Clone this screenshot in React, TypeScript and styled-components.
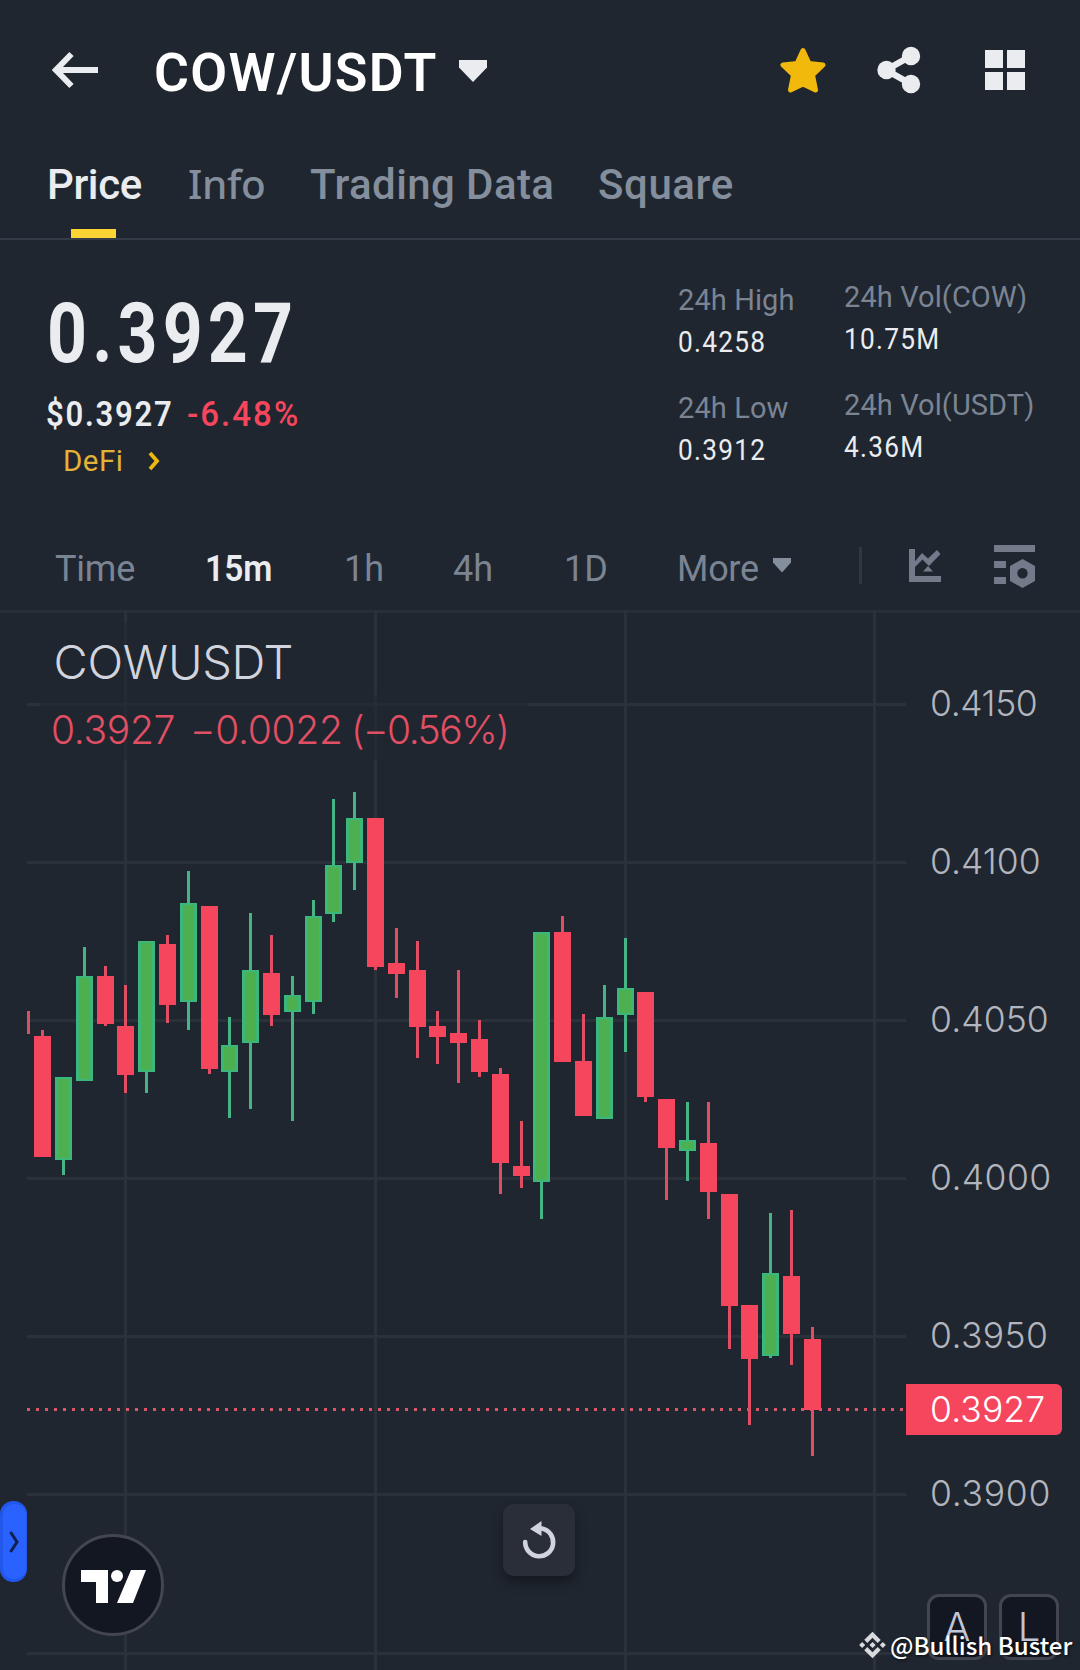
import React from "react";
import styled, { createGlobalStyle, css } from "styled-components";

const color = {
  bg: "#1f262f",
  line: "#333b47",
  grid: "#2b313b",
  text: "#eaecef",
  muted: "#848e9c",
  red: "#f6465d",
  yellow: "#f0b90b",
};

const Global = createGlobalStyle`
  * { box-sizing: border-box; }
  body { margin: 0; background: ${color.bg}; }
`;

const Screen = styled.div`
  width: 1080px;
  height: 1670px;
  overflow: hidden;
  display: flex;
  flex-direction: column;
  background: ${color.bg};
  color: ${color.text};
  font-family: Roboto, "Liberation Sans", sans-serif;
`;

type TextProps = {
  $size: number;
  $weight?: number;
  $color?: string;
  $track?: number;
  $narrow?: number;
  $line?: number;
};

const Text = styled.span<TextProps>`
  display: block;
  white-space: pre;
  font-size: ${(p) => p.$size}px;
  font-weight: ${(p) => p.$weight ?? 400};
  color: ${(p) => p.$color ?? color.text};
  letter-spacing: ${(p) => p.$track ?? 0}px;
  line-height: ${(p) => (p.$line ? `${p.$line}px` : 1.2)};
  ${(p) =>
    p.$narrow &&
    css`
      transform: scaleX(${p.$narrow});
      transform-origin: 0 50%;
    `}
`;

const ChartText = styled(Text)`
  font-family: Inter, "Liberation Sans", sans-serif;
`;

const SerifIText = styled(Text)`
  font-family: "Noto Sans", Roboto, sans-serif;
`;

const Header = styled.header`
  height: 140px;
  padding: 0 55px 0 52px;
  display: flex;
  align-items: center;
  svg { flex: none; display: block; }
`;

const PairTitle = styled.div`
  flex: 1;
  display: flex;
  align-items: center;
  padding: 7px 0 0 55px;
  svg { margin-top: -5px; }
`;

const TitleBox = styled.div`
  width: 305px;
`;

const HeaderActions = styled.div`
  display: grid;
  grid-template-columns: 97px 108px 40px;
  align-items: center;
  svg:first-child { margin-top: 2px; }
`;

const Tabs = styled.nav`
  height: 100px;
  padding: 20px 0 0 47px;
  display: flex;
  border-bottom: 2px solid ${color.line};
`;

const Tab = styled.div<{ $width: number; $active?: boolean }>`
  width: ${(p) => p.$width}px;
  height: 78px;
  display: flex;
  flex-direction: column;
  justify-content: space-between;
  ${(p) =>
    p.$active &&
    css`
      &::after {
        content: "";
        width: 45px;
        height: 9px;
        margin-left: 24px;
        background: #fcd535;
      }
    `}
`;

const Summary = styled.section`
  height: 270px;
  display: flex;
`;

const PriceBlock = styled.div`
  width: 678px;
  padding: 42px 0 0 47px;
`;

const PriceRow = styled.div`
  display: grid;
  grid-template-columns: 141px auto;
  margin-left: -1px;
`;

const Category = styled.div`
  display: flex;
  align-items: center;
  padding-left: 16px;
  margin-top: -1px;
  svg { margin-left: 25px; }
`;

const StatColumn = styled.div<{ $width: number; $top: number }>`
  width: ${(p) => p.$width}px;
  padding-top: ${(p) => p.$top}px;
  display: flex;
  flex-direction: column;
  gap: 24px;
`;

const IntervalBar = styled.nav`
  height: 100px;
  padding: 20px 0 0 55px;
  display: flex;
  svg { display: block; flex: none; }
`;

const Interval = styled.div<{ $width: number }>`
  width: ${(p) => p.$width}px;
  display: flex;
  > svg { margin-top: 28px; margin-left: 14px; }
`;

const Divider = styled.i`
  width: 3px;
  height: 37px;
  margin: 17px 47px 0 0;
  background: #303742;
`;

const ToolIcon = styled.div<{ $gap: number; $top: number }>`
  margin: ${(p) => p.$top}px ${(p) => p.$gap}px 0 0;
`;

const ChartArea = styled.section`
  position: relative;
  height: 1060px;
  display: flex;
`;

const Plot = styled.svg`
  display: block;
  flex: none;
  width: 906px;
  height: 1060px;
`;

const TopRule = styled.i`
  position: absolute;
  left: 906px;
  right: 0;
  top: 0;
  height: 3px;
  background: ${color.grid};
  opacity: 0.8;
`;

const Axis = styled.div`
  padding: 15.2px 0 0 24px;
`;

const AxisRow = styled.div`
  height: 158px;
  display: flex;
  align-items: center;
`;

const Legend = styled.div`
  position: absolute;
  left: 40px;
  top: 12px;
  display: flex;
  flex-direction: column;
  align-items: flex-start;
`;

const LegendRow = styled.div<{ $height: number; $pad: number; $width: number }>`
  height: ${(p) => p.$height}px;
  width: ${(p) => p.$width}px;
  padding-left: ${(p) => p.$pad}px;
  display: grid;
  grid-template-columns: 139px 161px auto;
  background: rgba(31, 38, 47, 0.55);
`;

const LastPrice = styled.div`
  position: absolute;
  left: 906px;
  top: 774px;
  width: 156px;
  height: 51px;
  padding-left: 24px;
  border-radius: 0 6px 6px 0;
  background: ${color.red};
`;

const DrawerHandle = styled.div`
  position: absolute;
  left: 0;
  top: 891px;
  width: 27px;
  height: 81px;
  border-radius: 13px;
  border: 3px solid #2157ea;
  border-right-width: 1px;
  background: #2962ff;
  display: flex;
  align-items: center;
  padding-left: 6px;
`;

const Badge = styled.div`
  position: absolute;
  left: 61.5px;
  top: 923.5px;
  width: 102px;
  height: 102px;
  border: 3px solid #434651;
  border-radius: 50%;
  background: #131722;
  svg { display: block; margin: 33px 0 0 16px; }
`;

const ResetButton = styled.div`
  position: absolute;
  left: 503px;
  top: 894px;
  width: 72px;
  height: 72px;
  border-radius: 11px;
  background: #2a2e39;
  box-shadow: 0 6px 12px rgba(0, 0, 0, 0.35);
  svg { display: block; margin: 13px 0 0 16px; }
`;

const ScaleKeys = styled.div`
  position: absolute;
  left: 927px;
  top: 984px;
  display: flex;
  gap: 12px;
`;

const ScaleKey = styled.div`
  width: 60px;
  height: 66px;
  border: 3px solid #434651;
  border-radius: 12px;
  background: #131722;
  display: flex;
  justify-content: center;
  padding-top: 5px;
`;

const Watermark = styled.div`
  position: absolute;
  left: 859px;
  top: 1017px;
  display: flex;
  align-items: center;
  height: 36px;
  gap: 4px;
  font-family: "Noto Sans CJK SC", "Noto Sans", sans-serif;
  font-size: 24.1px;
  font-weight: 500;
  line-height: 36px;
  color: #fff;
  white-space: pre;
  text-shadow: 1px 1px 3px rgba(0, 0, 0, 0.7);
`;

// [left, rising, high, bodyTop, bodyBottom, low] in screen pixels
type Candle = [number, 0 | 1, number, number, number, number];
const candles: Candle[] = [
  [34, 0, 1030, 1036, 1157, 1157],
  [55, 1, 1077, 1077, 1160, 1175],
  [76, 1, 947, 976, 1081, 1081],
  [97, 0, 966, 976, 1024, 1026],
  [117, 0, 985, 1026, 1075, 1093],
  [138, 1, 941, 941, 1072, 1093],
  [159, 0, 935, 944, 1005, 1023],
  [180, 1, 871, 903, 1002, 1030],
  [201, 0, 906, 906, 1069, 1074],
  [221, 1, 1017, 1045, 1072, 1118],
  [242, 1, 913, 970, 1043, 1109],
  [263, 0, 935, 973, 1015, 1026],
  [284, 1, 976, 995, 1012, 1121],
  [305, 1, 900, 916, 1002, 1014],
  [325, 1, 799, 865, 914, 922],
  [346, 1, 792, 818, 863, 890],
  [367, 0, 818, 818, 967, 970],
  [388, 0, 928, 963, 974, 998],
  [409, 0, 941, 970, 1027, 1058],
  [429, 0, 1011, 1026, 1037, 1064],
  [450, 0, 970, 1033, 1043, 1083],
  [471, 0, 1020, 1039, 1072, 1077],
  [492, 0, 1068, 1074, 1163, 1194],
  [513, 0, 1121, 1166, 1176, 1188],
  [533, 1, 932, 932, 1182, 1219],
  [554, 0, 916, 932, 1062, 1062],
  [575, 0, 1014, 1061, 1116, 1116],
  [596, 1, 985, 1017, 1119, 1119],
  [617, 1, 938, 988, 1015, 1052],
  [637, 0, 992, 992, 1097, 1102],
  [658, 0, 1099, 1099, 1148, 1200],
  [679, 1, 1102, 1140, 1151, 1181],
  [700, 0, 1102, 1143, 1192, 1219],
  [721, 0, 1194, 1194, 1306, 1349],
  [741, 0, 1305, 1305, 1359, 1425],
  [762, 1, 1213, 1273, 1356, 1358],
  [783, 0, 1210, 1276, 1334, 1365],
  [804, 0, 1327, 1339, 1410, 1456],
];

const gridX = [124, 374, 624, 873];
const gridY = [703, 861, 1019, 1177, 1335, 1493, 1652];
const prices: [string, number][] = [
  ["0.4150", -0.4],
  ["0.4100", 0],
  ["0.4050", 0.1],
  ["0.4000", 0.4],
  ["0.3950", 0.4],
  ["0.3900", 0.7],
];

function CandleChart() {
  return (
    <Plot viewBox="0 610 906 1060">
      <rect x="0" y="610" width="906" height="3" fill={color.grid} opacity="0.8" />
      {gridX.map((x) => (
        <rect key={x} x={x} y="610" width="3" height="1060" fill={color.grid} />
      ))}
      {gridY.map((y) => (
        <rect key={y} x="27" y={y} width="879" height="3" fill={color.grid} />
      ))}
      <line x1="27" x2="906" y1="1409.5" y2="1409.5" stroke="#d9566b" strokeWidth="3" strokeDasharray="3 6" />
      <rect x="27" y="1011" width="3" height="23" fill="#d94f63" />
      {candles.map(([x, up, high, top, bottom, low]) => (
        <g key={x}>
          <rect x={x + 7} y={high} width="3" height={low - high} fill={up ? "#45b585" : "#e14d62"} />
          <rect x={x} y={top} width="17" height={bottom - top} fill={up ? "#3cb77c" : color.red} />
          {up === 1 && <rect x={x + 3} y={top + 2} width="11" height={bottom - top - 4} fill="#4caf50" />}
        </g>
      ))}
    </Plot>
  );
}

function Stat({ label, value }: { label: string; value: string }) {
  return (
    <div>
      <Text $size={29} $line={40} $track={0.1} $color="#7b8493">{label}</Text>
      <Text $size={29.5} $line={44} $track={1.4} $narrow={0.89} $weight={450}>{value}</Text>
    </div>
  );
}

export default function App() {
  return (
    <Screen>
      <Global />
      <Header>
        <svg width="47" height="40" viewBox="0 0 47 40">
          <path d="M5 20H46M19.5 4L4 20L19.5 36" fill="none" stroke={color.text} strokeWidth="6" />
        </svg>
        <PairTitle>
          <TitleBox>
            <Text $size={53.5} $weight={600} $track={1.3} $color="#fff">COW/USDT</Text>
          </TitleBox>
          <svg width="28" height="23" viewBox="0 0 28 23"><path d="M0 0H28V7.5L14 22L0 7.5Z" fill={color.text} /></svg>
        </PairTitle>
        <HeaderActions>
          <svg width="46" height="48" viewBox="0 0 46 48">
            <path d="M23 3.5L29 16.5L43 18L32.5 28L35.5 43L23 37L10.5 43L13.5 28L3 18L17 16.5Z" fill={color.yellow} stroke={color.yellow} strokeWidth="5" strokeLinejoin="round" />
          </svg>
          <svg width="44" height="48" viewBox="0 0 44 48">
            <path d="M34 10L9 24L34 38" fill="none" stroke={color.text} strokeWidth="6.5" />
            <circle cx="34" cy="10" r="9.2" fill={color.text} />
            <circle cx="9.5" cy="24" r="9.2" fill={color.text} />
            <circle cx="34" cy="38" r="9.2" fill={color.text} />
          </svg>
          <svg width="40" height="40" viewBox="0 0 40 40">
            <path d="M0 0H18V18H0ZM22 0H40V18H22ZM0 22H18V40H0ZM22 22H40V40H22Z" fill={color.text} />
          </svg>
        </HeaderActions>
      </Header>

      <Tabs>
        <Tab $width={141} $active><Text $size={42} $weight={500} $line={50} $track={-0.4}>Price</Text></Tab>
        <Tab $width={122}><SerifIText $size={40.5} $weight={500} $line={48} $track={-0.4} $color={color.muted}>Info</SerifIText></Tab>
        <Tab $width={288}><Text $size={42} $weight={500} $line={50} $track={0.4} $color={color.muted}>Trading Data</Text></Tab>
        <Tab $width={160}><Text $size={42} $weight={500} $line={50} $track={0.6} $color={color.muted}>Square</Text></Tab>
      </Tabs>

      <Summary>
        <PriceBlock>
          <Text $size={84} $weight={700} $line={104} $track={6.2} $narrow={0.83}>0.3927</Text>
          <PriceRow>
            <Text $size={35.5} $weight={600} $line={56} $track={2} $narrow={0.875}>$0.3927</Text>
            <Text $size={35.5} $weight={500} $line={56} $track={2.2} $narrow={0.93} $color={color.red}>-6.48%</Text>
          </PriceRow>
          <Category>
            <Text $size={29.5} $line={40} $track={0.5} $color="#e3b236">DeFi</Text>
            <svg width="12" height="20" viewBox="0 0 12 20"><path d="M2 2L9 10L2 18" fill="none" stroke={color.yellow} strokeWidth="3.8" /></svg>
          </Category>
        </PriceBlock>
        <StatColumn $width={166} $top={40}>
          <Stat label="24h High" value="0.4258" />
          <Stat label="24h Low" value="0.3912" />
        </StatColumn>
        <StatColumn $width={230} $top={37}>
          <Stat label="24h Vol(COW)" value="10.75M" />
          <Stat label="24h Vol(USDT)" value="4.36M" />
        </StatColumn>
      </Summary>

      <IntervalBar>
        <Interval $width={150}><Text $size={36} $line={78} $track={-0.2} $color="#7b8493">Time</Text></Interval>
        <Interval $width={139}><Text $size={36} $line={78} $weight={600} $narrow={0.93}>15m</Text></Interval>
        <Interval $width={109}><Text $size={36} $line={78} $color="#7b8493">1h</Text></Interval>
        <Interval $width={111}><Text $size={36} $line={78} $color="#7b8493">4h</Text></Interval>
        <Interval $width={113}><Text $size={36} $line={78} $color="#7b8493">1D</Text></Interval>
        <Interval $width={182}>
          <Text $size={36} $line={78} $track={-0.3} $color="#7b8493">More</Text>
          <svg width="18" height="15" viewBox="0 0 18 15"><path d="M0 0H18V4.5L9 14.5L0 4.5Z" fill={color.muted} /></svg>
        </Interval>
        <Divider />
        <ToolIcon $gap={52} $top={19}>
          <svg width="33" height="33" viewBox="0 0 33 33" fill="#737b8a">
            <path d="M0 0H6V27H32V33H0Z" />
            <path d="M5 13.5L13 4L19 9.5L28 1L31.5 5L20 17L13.5 10.5L5 19Z" />
            <path d="M14 22.5L19 17L24 22.5Z" />
          </svg>
        </ToolIcon>
        <ToolIcon $gap={0} $top={15}>
          <svg width="42" height="44" viewBox="0 0 42 44" fill="#737b8a">
            <path d="M0 0H41V7H0ZM0 16H12V23H0ZM0 32H12V39H0Z" />
            <path fillRule="evenodd" d="M28.5 14L41 21V36L28.5 43L16 36V21ZM28.5 23A5.2 5.2 0 1 0 28.5 33.4A5.2 5.2 0 1 0 28.5 23Z" />
          </svg>
        </ToolIcon>
      </IntervalBar>

      <ChartArea>
        <CandleChart />
        <TopRule />
        <Axis>
          {prices.map(([p, track]) => (
            <AxisRow key={p}>
              <ChartText $size={35.5} $weight={300} $color="#b2b5be" $track={track}>{p}</ChartText>
            </AxisRow>
          ))}
        </Axis>
        <Legend>
          <LegendRow $height={73} $pad={13.5} $width={270}>
            <ChartText $size={47} $weight={300} $line={80} $color="#d1d4dc" $track={-0.3}>COWUSDT</ChartText>
          </LegendRow>
          <LegendRow $height={65} $pad={11} $width={488}>
            <ChartText $size={39} $weight={300} $line={70} $color="#e04f64" $track={-0.3}>0.3927</ChartText>
            <ChartText $size={39} $weight={300} $line={70} $color="#e04f64" $track={-0.3}>−0.0022</ChartText>
            <ChartText $size={39} $weight={300} $line={70} $color="#e04f64" $track={-1.5}>(−0.56%)</ChartText>
          </LegendRow>
        </Legend>
        <LastPrice>
          <ChartText $size={35.5} $weight={300} $line={51} $color="#fff" $track={0.1}>0.3927</ChartText>
        </LastPrice>
        <DrawerHandle>
          <svg width="10" height="22" viewBox="0 0 10 22"><path d="M1.5 1L8 11L1.5 21" fill="none" stroke="#10204f" strokeWidth="3" /></svg>
        </DrawerHandle>
        <Badge>
          <svg width="66" height="34" viewBox="0 0 66 34" fill="#fff">
            <path d="M0 0H27V33H15V12H0Z" />
            <circle cx="36" cy="6" r="6" />
            <path d="M50 0H65L52 33H36Z" />
          </svg>
        </Badge>
        <ResetButton>
          <svg width="40" height="44" viewBox="0 0 40 44">
            <path d="M6.2 25A14 14 0 1 0 23 11.5" fill="none" stroke="#d1d4dc" strokeWidth="4.6" strokeLinecap="round" />
            <path d="M11 12L22.5 4V19Z" fill="#d1d4dc" />
          </svg>
        </ResetButton>
        <ScaleKeys>
          <ScaleKey><ChartText $size={40} $weight={300} $line={50} $color="#c3c6d4">A</ChartText></ScaleKey>
          <ScaleKey><ChartText $size={40} $weight={300} $line={50} $color="#c3c6d4">L</ChartText></ScaleKey>
        </ScaleKeys>
        <Watermark>
          <svg width="27" height="28" viewBox="0 0 126 126" fill="#d8dade">
            <path d="M38.7 53.2L63 28.9l24.3 24.3 14.2-14.1L63 .6 24.6 39ZM.6 63L14.7 48.9 28.8 63 14.7 77.1ZM38.7 72.8L63 97.1l24.3-24.3 14.2 14.1L63 125.4 24.6 87ZM97.2 63l14.1-14.1L125.4 63l-14.1 14.1ZM77.3 63L63 48.6 48.6 63 63 77.4Z" />
          </svg>
          @Bullish Buster
        </Watermark>
      </ChartArea>
    </Screen>
  );
}
